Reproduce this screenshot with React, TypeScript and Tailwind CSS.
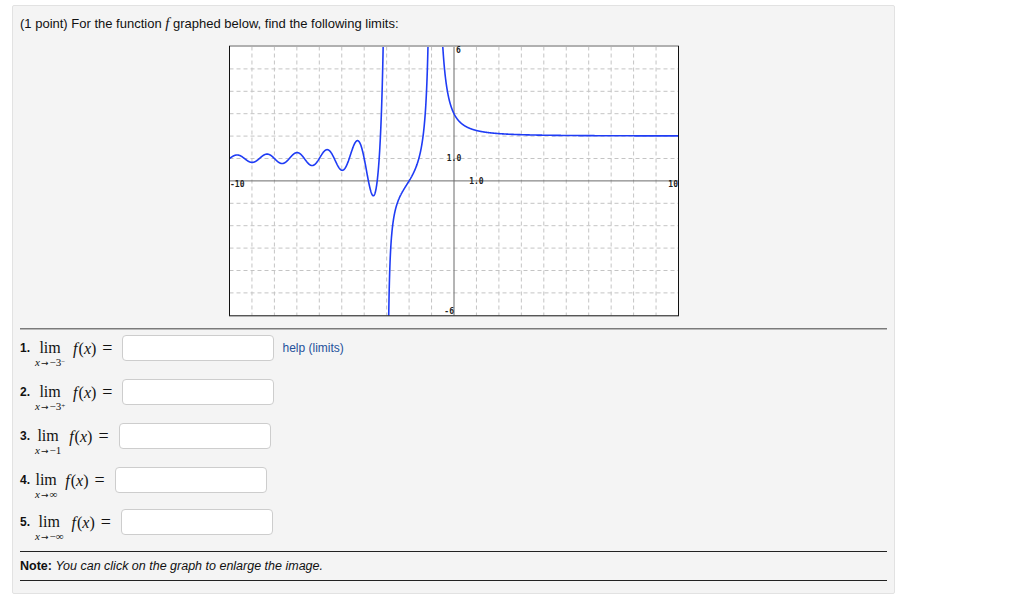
import React from "react";

// graph mapping: x in [-10,10], y in [-6,6]
const X = (x: number) => 1.5 + (x + 10) * 22.45;
const Y = (y: number) => 1.5 + (6 - y) * 22.4;

function trace(f: (x: number) => number, a: number, b: number, step = 0.004) {
  let d = "";
  let pen = false;
  for (let x = a; x <= b + 1e-9; x += step) {
    const y = f(x);
    if (!isFinite(y) || Math.abs(y) > 9) {
      pen = false;
      continue;
    }
    d += (pen ? "L" : "M") + X(x).toFixed(2) + " " + Y(y).toFixed(2);
    pen = true;
  }
  return d;
}

const left = (x: number) => 1 + (1.05 * Math.cos(1.5 * Math.PI * (x + 3))) / (-3 - x);
const middle = (x: number) => 1.086 / (-1 - x) - 0.558 / (x + 3) - 0.528;
const right = (x: number) => 2 + 1 / ((x + 1) * (x + 1));

const lbl = "font-['DejaVu_Sans_Mono',monospace] font-bold text-[8px] fill-[#222]";

const Graph: React.FC = () => {
  const xs = Array.from({ length: 19 }, (_, i) => i - 9).filter((v) => v !== 0);
  const ys = Array.from({ length: 11 }, (_, i) => i - 5).filter((v) => v !== 0);
  return (
    <svg width={452} height={272} className="block cursor-pointer">
      <defs>
        <clipPath id="plot">
          <rect x={1.5} y={1.5} width={449} height={269} />
        </clipPath>
      </defs>
      <rect x={1.5} y={1.5} width={449} height={269} fill="#fff" />
      {xs.map((v) => (
        <line key={"gx" + v} x1={X(v)} x2={X(v)} y1={1.5} y2={270.3} stroke="#c4c4c4" strokeDasharray="4 3" />
      ))}
      {ys.map((v) => (
        <line key={"gy" + v} y1={Y(v)} y2={Y(v)} x1={1.5} x2={450.5} stroke="#c4c4c4" strokeDasharray="4 3" />
      ))}
      <line x1={1.5} x2={450.5} y1={Y(0)} y2={Y(0)} stroke="#6b6b6b" />
      <line y1={1.5} y2={270.3} x1={X(0)} x2={X(0)} stroke="#6b6b6b" />
      <g clipPath="url(#plot)" fill="none" stroke="#1f3cf5" strokeWidth={1.6} strokeLinejoin="round">
        <path d={trace(left, -10, -3.001)} />
        <path d={trace(middle, -2.999, -1.001)} />
        <path d={trace(right, -0.999, 10)} />
      </g>
      <line x1={1} x2={451} y1={1} y2={1} stroke="#b0b0b0" strokeWidth={2} />
      <line x1={1.5} x2={1.5} y1={1} y2={270.8} stroke="#111" />
      <line x1={450.5} x2={450.5} y1={1} y2={270.8} stroke="#111" />
      <line x1={1} x2={451} y1={270.8} y2={270.8} stroke="#111" />
      <text x={2} y={142} className={lbl}>-10</text>
      <text x={450} y={142} textAnchor="end" className={lbl}>10</text>
      <text x={228} y={8} className={lbl}>6</text>
      <text x={226} y={269} textAnchor="end" className={lbl}>-6</text>
      <text x={X(0)} y={116} textAnchor="middle" className={lbl}>1.0</text>
      <text x={X(1)} y={139} textAnchor="middle" className={lbl}>1.0</text>
    </svg>
  );
};

type Row = { n: string; to: string; sup?: string; help?: boolean; mt: string };

const rows: Row[] = [
  { n: "1.", to: "−3", sup: "−", help: true, mt: "mt-[5px]" },
  { n: "2.", to: "−3", sup: "+", mt: "mt-[18px]" },
  { n: "3.", to: "−1", mt: "mt-[18px]" },
  { n: "4.", to: "∞", mt: "mt-[18px]" },
  { n: "5.", to: "−∞", mt: "mt-[16px]" },
];

const LimitRow: React.FC<{ r: Row }> = ({ r }) => (
  <div className={`flex items-start h-[26px] ${r.mt}`}>
    <div className="flex items-start mt-[4px] text-[#111]">
      <span className="text-[12px] font-bold leading-[18px] w-[14px] mr-[1px]">{r.n}</span>
      <span className="flex flex-col items-center font-['Liberation_Serif','Times_New_Roman',serif]">
        <span className="text-[16px] leading-[18px]">lim</span>
        <span className="text-[11px] leading-[10px] whitespace-nowrap">
          <i>x</i>
          <span className="font-['DejaVu_Sans',sans-serif] text-[9px] mx-[1px]">→</span>
          {r.to}
          {r.sup && <sup className="text-[7px] relative -top-[2px]">{r.sup}</sup>}
        </span>
      </span>
      <span className="text-[16px] leading-[18px] ml-[8px] whitespace-nowrap font-['Liberation_Serif','Times_New_Roman',serif]">
        <i>f</i>
        <span className="ml-[1px]">(</span>
        <i>x</i>)<span className="ml-[6px] text-[18px] leading-[18px]">=</span>
      </span>
    </div>
    <input
      type="text"
      className="ml-[10px] h-[26px] w-[152px] bg-white border border-[#cdcdcd] rounded-[4px] outline-none"
    />
    {r.help && <a className="ml-[8px] mt-[5px] text-[12px] leading-[16px] text-[#24519b]">help (limits)</a>}
  </div>
);

export default function App() {
  return (
    <div className="min-h-[603px] bg-white pt-[5px] pl-[12px] font-['Liberation_Sans',Arial,sans-serif]">
      <div className="w-[883px] h-[589px] bg-[#f4f4f4] border border-[#e2e2e2] rounded-[2px] px-[7px] pt-[9px] flex flex-col">
        <p className="text-[13px] leading-[16px] text-[#111]">
          (1 point) For the function{" "}
          <i className="text-[15px] font-['Liberation_Serif','Times_New_Roman',serif]">f</i> graphed below, find
          the following limits:
        </p>
        <div className="flex justify-center mt-[13px]">
          <Graph />
        </div>
        <div className="mt-[11px] border-t border-t-[#7a7a7a] border-b border-b-[#b8b8b8]" />
        {rows.map((r) => (
          <LimitRow key={r.n} r={r} />
        ))}
        <div className="mt-[16px] border-t border-[#222]" />
        <p className="text-[12.5px] leading-[16px] text-[#111] py-[6px]">
          <b>Note:</b> <i>You can click on the graph to enlarge the image.</i>
        </p>
        <div className="border-t border-[#222]" />
      </div>
    </div>
  );
}
